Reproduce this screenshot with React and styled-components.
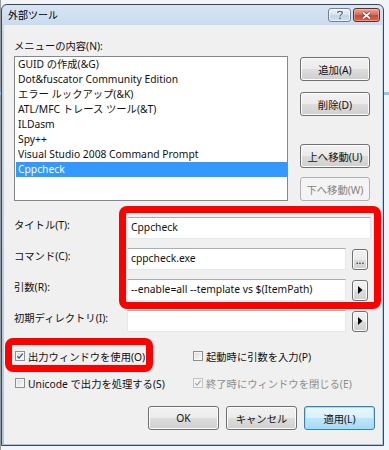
import styled, { createGlobalStyle } from 'styled-components'

const GlobalStyle = createGlobalStyle`
  html, body { margin: 0; padding: 0; }
  body {
    font-family: "Noto Sans", "Noto Sans CJK JP", sans-serif;
    font-size: 10.3px;
    color: #111;
  }
`

const Desktop = styled.div`
  position: relative;
  width: 389px;
  height: 450px;
  overflow: hidden;
  box-sizing: border-box;
  padding: 4px 0 0 1px;
  background:
    linear-gradient(to bottom, transparent 92px, #9cc3e6 92px, #9cc3e6 95px, transparent 95px),
    linear-gradient(to right, #9a9a9a 0, #9a9a9a 1px, #f1f4f8 1px);
`

const Window = styled.div`
  width: 383px;
  height: 442px;
  box-sizing: border-box;
  border: 1px solid #3e4753;
  border-radius: 6px 6px 0 0;
  padding: 0 1px 1px 2px;
  background: linear-gradient(#d6e5f4, #c3d7ed 30px, #a9c6e4);
  display: flex;
  flex-direction: column;
`

const TitleBar = styled.div`
  height: 20px;
  display: flex;
  align-items: flex-start;
  justify-content: space-between;
`

const Title = styled.div`
  padding-left: 4px;
  line-height: 20px;
  font-size: 10px;
  color: #000;
`

const CaptionButtons = styled.div`
  display: flex;
  gap: 2px;
  margin-top: 3px;
  margin-right: 2px;
`

const CaptionButton = styled.div`
  width: ${p => p.$w}px;
  height: 14px;
  box-sizing: border-box;
  border: 1px solid ${p => (p.$close ? '#6e2b25' : '#6f8196')};
  border-radius: 3px;
  display: flex;
  align-items: center;
  justify-content: center;
  background: ${p =>
    p.$close
      ? 'linear-gradient(#e9a99b, #d8705f 45%, #c44b3a 55%, #d26a54)'
      : 'linear-gradient(#eef3f9, #d9e4f0 45%, #c3d3e6 55%, #d2dfee)'};
  box-shadow: inset 0 0 0 1px ${p => (p.$close ? 'rgba(255,200,190,0.5)' : 'rgba(255,255,255,0.6)')};
`

const Client = styled.div`
  flex: 1;
  background: #f0f0f0;
  padding: 13px 0 0 10px;
  display: flex;
  flex-direction: column;
`

const Label = styled.div`
  line-height: 16px;
  white-space: nowrap;
`

const ListRow = styled.div`
  margin-top: 2px;
  width: 356px;
  display: flex;
  justify-content: space-between;
`

const ListBox = styled.div`
  width: 274px;
  height: 145px;
  box-sizing: border-box;
  border: 1px solid #828790;
  background: #fff;
`

const ListItem = styled.div`
  height: 15px;
  line-height: 15px;
  margin-left: 1px;
  padding-left: 2px;
  white-space: nowrap;
  overflow: hidden;
  background: ${p => (p.$selected ? '#3399ff' : 'transparent')};
  color: ${p => (p.$selected ? '#fff' : '#111')};
`

const ButtonColumn = styled.div`
  display: flex;
  flex-direction: column;
  padding-top: 1px;
`

const Button = styled.div`
  width: ${p => p.$w || 70}px;
  height: 24px;
  margin-top: ${p => p.$mt || 0}px;
  box-sizing: border-box;
  border-radius: 3px;
  display: flex;
  align-items: center;
  justify-content: center;
  white-space: nowrap;
  border: 1px solid ${p => (p.$default ? '#3c7fb1' : p.$disabled ? '#adb2b5' : '#707070')};
  color: ${p => (p.$disabled ? '#838383' : '#111')};
  background: ${p =>
    p.$default
      ? 'linear-gradient(#eaf6fd, #d9f0fc 50%, #bee6fd 50%, #a7d9f5)'
      : p.$disabled
      ? '#f4f4f4'
      : 'linear-gradient(#f2f2f2, #ebebeb 50%, #dddddd 50%, #cfcfcf)'};
  box-shadow: inset 0 0 0 1px ${p => (p.$default ? '#9ee0fb' : p.$disabled ? 'transparent' : '#fcfcfc')};
`

const Form = styled.div`
  margin-top: 16px;
  width: 357px;
  display: grid;
  grid-template-columns: 113px 1fr;
  row-gap: 9px;
`

const FieldLabel = styled.div`
  line-height: 14px;
  margin-top: 1px;
  white-space: nowrap;
`

const Field = styled.div`
  display: flex;
  align-items: center;
  height: 22px;
`

const Input = styled.div`
  flex: 1;
  height: 22px;
  box-sizing: border-box;
  border: 1px solid #e3e9ef;
  border-top-color: #abadb3;
  background: #fff;
  padding: 0 3px;
  line-height: 19px;
  white-space: nowrap;
  overflow: hidden;
`

const SideButton = styled(Button)`
  width: 16px;
  height: 21px;
  margin-left: 6px;
  margin-right: 3px;
  align-items: ${p => (p.$dots ? 'flex-end' : 'center')};
  padding-bottom: ${p => (p.$dots ? '5px' : '0')};
  line-height: 8px;
`

const Checks = styled.div`
  margin-top: 16px;
  margin-left: 1px;
  display: grid;
  grid-template-columns: 178px 1fr;
  row-gap: 11px;
`

const CheckRow = styled.div`
  height: 16px;
  display: flex;
  align-items: center;
  gap: 3px;
  white-space: nowrap;
  color: ${p => (p.$disabled ? '#8d8d8d' : '#111')};
`

const Box = styled.span`
  width: 10px;
  height: 10px;
  box-sizing: border-box;
  border: 1px solid ${p => (p.$disabled ? '#c2c2c2' : '#8e8f8f')};
  background: ${p => (p.$disabled ? '#f4f4f4' : 'linear-gradient(135deg, #d8d8d8, #fdfdfd)')};
  box-shadow: inset 0 0 0 1px #f6f6f6;
  display: flex;
  align-items: center;
  justify-content: center;
`

const ButtonRow = styled.div`
  margin-top: 15px;
  width: 361px;
  display: flex;
  justify-content: flex-end;
  gap: 7px;
`

const Highlight = styled.div`
  position: absolute;
  left: ${p => p.$x}px;
  top: ${p => p.$y}px;
  width: ${p => p.$w}px;
  height: ${p => p.$h}px;
  box-sizing: border-box;
  border: 7px solid #ff0000;
  border-radius: 8px;
  pointer-events: none;
`

const Check = ({ checked, disabled, children }) => (
  <CheckRow $disabled={disabled}>
    <Box $disabled={disabled}>
      {checked && (
        <svg width="8" height="8" viewBox="0 0 8 8">
          <path d="M1.3 4.2 L3.1 6.1 L6.7 1.6" fill="none" stroke={disabled ? '#a8a8a8' : '#3d5184'} strokeWidth="1.3" />
        </svg>
      )}
    </Box>
    {children}
  </CheckRow>
)

const Arrow = () => (
  <svg width="6" height="8" viewBox="0 0 6 8">
    <polygon points="1,0 5.5,4 1,8" fill="#000" />
  </svg>
)

const items = [
  'GUID の作成(&G)',
  'Dot&fuscator Community Edition',
  'エラー ルックアップ(&K)',
  'ATL/MFC トレース ツール(&T)',
  'ILDasm',
  'Spy++',
  'Visual Studio 2008 Command Prompt',
  'Cppcheck',
]

export default function App() {
  return (
    <>
      <GlobalStyle />
      <Desktop>
        <Window>
          <TitleBar>
            <Title>外部ツール</Title>
            <CaptionButtons>
              <CaptionButton $w={23}>
                <svg width="8" height="10" viewBox="0 0 8 10">
                  <path d="M1.6 3 C1.6 0.9 6.4 0.9 6.4 3 C6.4 4.6 4 4.6 4 6.6" fill="none" stroke="#fff" strokeWidth="2.4" />
                  <path d="M1.6 3 C1.6 0.9 6.4 0.9 6.4 3 C6.4 4.6 4 4.6 4 6.6" fill="none" stroke="#5b6675" strokeWidth="1.3" />
                  <rect x="3.3" y="7.6" width="1.5" height="1.5" fill="#5b6675" />
                </svg>
              </CaptionButton>
              <CaptionButton $w={27} $close>
                <svg width="11" height="9" viewBox="0 0 11 9">
                  <path d="M2 1.5 L9 7.5 M9 1.5 L2 7.5" stroke="#7a2b22" strokeWidth="3.2" />
                  <path d="M2 1.5 L9 7.5 M9 1.5 L2 7.5" stroke="#fff" strokeWidth="1.8" />
                </svg>
              </CaptionButton>
            </CaptionButtons>
          </TitleBar>
          <Client>
            <Label>メニューの内容(N):</Label>
            <ListRow>
              <ListBox>
                {items.map((t, i) => (
                  <ListItem key={t} $selected={i === items.length - 1}>{t}</ListItem>
                ))}
              </ListBox>
              <ButtonColumn>
                <Button>追加(A)</Button>
                <Button $mt={11}>削除(D)</Button>
                <Button $mt={28}>上へ移動(U)</Button>
                <Button $mt={9} $disabled>下へ移動(W)</Button>
              </ButtonColumn>
            </ListRow>
            <Form>
              <FieldLabel>タイトル(T):</FieldLabel>
              <Field><Input>Cppcheck</Input></Field>
              <FieldLabel>コマンド(C):</FieldLabel>
              <Field>
                <Input>cppcheck.exe</Input>
                <SideButton $dots>...</SideButton>
              </Field>
              <FieldLabel>引数(R):</FieldLabel>
              <Field>
                <Input>--enable=all --template vs $(ItemPath)</Input>
                <SideButton><Arrow /></SideButton>
              </Field>
              <FieldLabel>初期ディレクトリ(I):</FieldLabel>
              <Field>
                <Input />
                <SideButton><Arrow /></SideButton>
              </Field>
            </Form>
            <Checks>
              <Check checked>出力ウィンドウを使用(O)</Check>
              <Check>起動時に引数を入力(P)</Check>
              <Check>Unicode で出力を処理する(S)</Check>
              <Check checked disabled>終了時にウィンドウを閉じる(E)</Check>
            </Checks>
            <ButtonRow>
              <Button $w={71}>OK</Button>
              <Button $w={71}>キャンセル</Button>
              <Button $w={71} $default>適用(L)</Button>
            </ButtonRow>
          </Client>
        </Window>
        <Highlight $x={119} $y={206} $w={262} $h={103} />
        <Highlight $x={5} $y={338} $w={148} $h={34} />
      </Desktop>
    </>
  )
}
